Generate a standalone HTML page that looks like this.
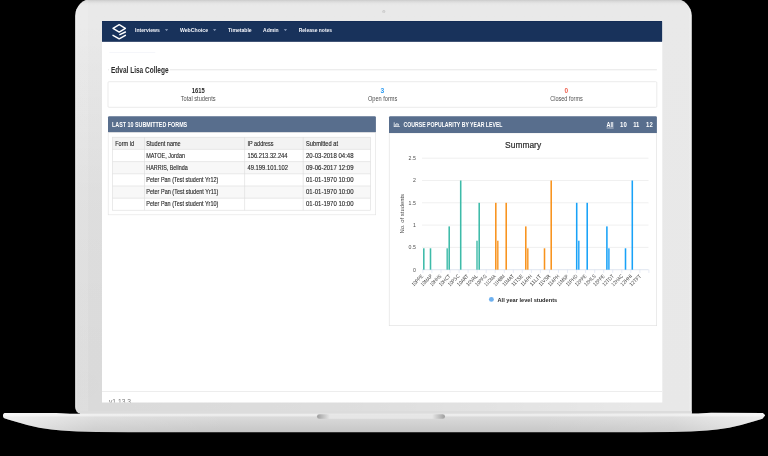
<!DOCTYPE html>
<html>
<head>
<meta charset="utf-8">
<title>Dashboard</title>
<style>
html,body{margin:0;padding:0;background:#000;}
body{width:768px;height:456px;overflow:hidden;font-family:"Liberation Sans",sans-serif;}
svg{display:block;}
text{font-family:"Liberation Sans",sans-serif;}
</style>
</head>
<body>
<svg width="768" height="456" viewBox="0 0 768 456">
<defs>
  <linearGradient id="lidg" x1="0" y1="0" x2="0" y2="413" gradientUnits="userSpaceOnUse">
    <stop offset="0" stop-color="#cbcbcb"/>
    <stop offset="0.004" stop-color="#dbdbdb"/>
    <stop offset="0.009" stop-color="#e6e6e6"/>
    <stop offset="0.014" stop-color="#e9e9e9"/>
    <stop offset="1" stop-color="#e8e8e8"/>
  </linearGradient>
  <radialGradient id="lidsh" gradientUnits="userSpaceOnUse" cx="0" cy="0" r="1" gradientTransform="translate(75 385) scale(570 365)">
    <stop offset="0" stop-color="#000" stop-opacity="0.064"/>
    <stop offset="0.5" stop-color="#000" stop-opacity="0.046"/>
    <stop offset="1" stop-color="#000" stop-opacity="0"/>
  </radialGradient>
  <linearGradient id="lidh" x1="75.2" y1="0" x2="691.7" y2="0" gradientUnits="userSpaceOnUse">
    <stop offset="0" stop-color="#fff" stop-opacity="0.4"/>
    <stop offset="0.004" stop-color="#fff" stop-opacity="0.1"/>
    <stop offset="0.02" stop-color="#fff" stop-opacity="0.1"/>
    <stop offset="0.022" stop-color="#fff" stop-opacity="0"/>
    <stop offset="0.995" stop-color="#fff" stop-opacity="0"/>
    <stop offset="1" stop-color="#fff" stop-opacity="0.4"/>
  </linearGradient>
  <linearGradient id="baseg" x1="0" y1="412.9" x2="0" y2="432.3" gradientUnits="userSpaceOnUse">
    <stop offset="0" stop-color="#f0f0f0"/>
    <stop offset="0.14" stop-color="#ececec"/>
    <stop offset="0.22" stop-color="#dadada"/>
    <stop offset="1" stop-color="#c6c6c6"/>
  </linearGradient>
  <linearGradient id="baseh" x1="3" y1="0" x2="765" y2="0" gradientUnits="userSpaceOnUse">
    <stop offset="0" stop-color="#fff" stop-opacity="0.55"/>
    <stop offset="0.12" stop-color="#fff" stop-opacity="0.12"/>
    <stop offset="0.3" stop-color="#fff" stop-opacity="0"/>
    <stop offset="0.7" stop-color="#fff" stop-opacity="0"/>
    <stop offset="0.88" stop-color="#fff" stop-opacity="0.12"/>
    <stop offset="1" stop-color="#fff" stop-opacity="0.55"/>
  </linearGradient>
  <linearGradient id="notchg" x1="0" y1="0" x2="1" y2="0">
    <stop offset="0" stop-color="#9c9c9c"/>
    <stop offset="0.03" stop-color="#b4b4b4"/>
    <stop offset="0.1" stop-color="#e6e6e6"/>
    <stop offset="0.9" stop-color="#e6e6e6"/>
    <stop offset="0.97" stop-color="#b4b4b4"/>
    <stop offset="1" stop-color="#9c9c9c"/>
  </linearGradient>
  <filter id="soft" color-interpolation-filters="sRGB" x="0" y="0" width="768" height="456" filterUnits="userSpaceOnUse"><feGaussianBlur stdDeviation="0.3"/></filter>
  <clipPath id="scr"><rect x="102" y="21" width="560.3" height="381.5"/></clipPath>
</defs>
<rect x="0" y="0" width="768" height="456" fill="#000"/>

<!-- LID -->
<path d="M80.7 413.6 A5.5 6.5 0 0 1 75.2 407.1 L75.2 15.8 A17 17 0 0 1 92.2 -1.2 L674.7 -1.2 A17 17 0 0 1 691.7 15.8 L691.7 413.6 Z" fill="url(#lidg)"/>
<path d="M80.7 413.6 A5.5 6.5 0 0 1 75.2 407.1 L75.2 15.8 A17 17 0 0 1 92.2 -1.2 L674.7 -1.2 A17 17 0 0 1 691.7 15.8 L691.7 413.6 Z" fill="url(#lidsh)"/>
<path d="M80.7 413.6 A5.5 6.5 0 0 1 75.2 407.1 L75.2 15.8 A17 17 0 0 1 92.2 -1.2 L674.7 -1.2 A17 17 0 0 1 691.7 15.8 L691.7 413.6 Z" fill="url(#lidh)"/>
<circle cx="383.8" cy="11.5" r="1.5" fill="#c9c9c9"/><circle cx="383.8" cy="11.9" r="0.9" fill="#dadada"/>

<!-- BASE -->
<rect x="80" y="411" width="611.7" height="5" fill="#dcdcdc"/>
<path d="M3.0 415.6 L3.4 414 L4.6 412.9 L56 412.9 L70 413.8 L698 413.6 L711 412.8 L762.8 412.9 L765.2 415.3 L762.4 418.7 L754.1 421.3 L747.1 423.2 L741.1 425.0 L729.1 427.7 L717.1 429.4 L707.1 430.4 L691.1 431.4 L672.1 432.0 L640.1 432.3 L128.2 432.3 L96.2 432.0 L77.2 431.4 L61.2 430.4 L51.2 429.4 L39.2 427.7 L27.2 425.0 L21.2 423.2 L14.2 421.3 L8.2 419.6 L4.4 418.2 L3.3 417.2 Z" fill="url(#baseg)"/>
<path d="M3.0 415.6 L3.4 414 L4.6 412.9 L56 412.9 L70 413.8 L698 413.6 L711 412.8 L762.8 412.9 L765.2 415.3 L762.4 418.7 L754.1 421.3 L747.1 423.2 L741.1 425.0 L729.1 427.7 L717.1 429.4 L707.1 430.4 L691.1 431.4 L672.1 432.0 L640.1 432.3 L128.2 432.3 L96.2 432.0 L77.2 431.4 L61.2 430.4 L51.2 429.4 L39.2 427.7 L27.2 425.0 L21.2 423.2 L14.2 421.3 L8.2 419.6 L4.4 418.2 L3.3 417.2 Z" fill="url(#baseh)"/>
<rect x="317" y="414.2" width="128" height="4.6" rx="2.3" fill="url(#notchg)"/>

<!-- SCREEN -->
<rect x="102" y="21" width="560.3" height="381.5" fill="#ffffff"/>
<g clip-path="url(#scr)"><g filter="url(#soft)">
  <!-- navbar -->
  <rect x="102" y="21" width="560.3" height="20.8" fill="#132b55"/><rect x="102" y="21.8" width="560.3" height="19.2" fill="#18325b"/>
  <g fill="none" stroke="#fff" stroke-width="1.4" stroke-linejoin="round" stroke-linecap="round">
    <path d="M113 28.4 L119.2 24.7 L125.4 28.4 L119.2 32.1 Z"/>
    <path d="M119.8 34.6 L125.4 32"/>
    <path d="M113 35.3 L119.2 38.9 L125.4 35.3"/>
  </g>
  <g fill="#f4f6fc" font-size="5.9" font-weight="700">
    <text x="135" y="32" textLength="24.7" lengthAdjust="spacingAndGlyphs">Interviews</text>
    <text x="179.9" y="32" textLength="28.2" lengthAdjust="spacingAndGlyphs">WebChoice</text>
    <text x="228" y="32" textLength="23.7" lengthAdjust="spacingAndGlyphs">Timetable</text>
    <text x="263" y="32" textLength="15.7" lengthAdjust="spacingAndGlyphs">Admin</text>
    <text x="298.7" y="32" textLength="33.4" lengthAdjust="spacingAndGlyphs">Release notes</text>
  </g>
  <g fill="#98a8c6">
    <path d="M164.9 29.2 h3.3 l-1.65 1.9 z"/>
    <path d="M213 29.2 h3.3 l-1.65 1.9 z"/>
    <path d="M283.8 29.2 h3.3 l-1.65 1.9 z"/>
  </g>

  <rect x="109.3" y="52.4" width="46" height="0.6" fill="#eef1f7"/>
  <!-- title -->
  <rect x="108" y="69.5" width="548.9" height="0.7" fill="#dcdcdc"/>
  <rect x="109" y="64" width="61" height="11" fill="#fff"/>
  <text x="111" y="72.6" font-size="8.4" font-weight="700" fill="#2b2b2b" textLength="57.6" lengthAdjust="spacingAndGlyphs">Edval Lisa College</text>

  <!-- stats -->
  <rect x="108" y="81.7" width="548.8" height="25.6" rx="1" fill="#fff" stroke="#dedede" stroke-width="0.6"/>
  <g font-size="6.6" text-anchor="middle" stroke-width="0.12">
    <text x="198.3" y="92.9" font-size="6.7" font-weight="700" fill="#2a2a2a" textLength="13" lengthAdjust="spacingAndGlyphs">1615</text>
    <text x="198.2" y="101.1" fill="#505050" textLength="34.8" lengthAdjust="spacingAndGlyphs">Total students</text>
    <text x="382.4" y="92.9" font-size="6.7" font-weight="700" fill="#2b9af0">3</text>
    <text x="382.6" y="101.1" fill="#505050" textLength="29.4" lengthAdjust="spacingAndGlyphs">Open forms</text>
    <text x="566.3" y="92.9" font-size="6.5" font-weight="700" fill="#f0604e">0</text>
    <text x="566.5" y="101.1" fill="#505050" textLength="32.5" lengthAdjust="spacingAndGlyphs">Closed forms</text>
  </g>

  <!-- panel 1 -->
  <path d="M108 132.6 V117.5 a1.2 1.2 0 0 1 1.2 -1.2 H374.7 a1.2 1.2 0 0 1 1.2 1.2 V132.6 Z" fill="#586e8d"/>
  <text x="112" y="127" font-size="6.7" font-weight="700" fill="#fff" textLength="75.2" lengthAdjust="spacingAndGlyphs">LAST 10 SUBMITTED FORMS</text>

  <rect x="108.2" y="132.6" width="267.5" height="82.2" fill="#fff" stroke="#e2e2e2" stroke-width="0.6"/>
  <!-- table -->
  <rect x="112.6" y="161.6" width="257.9" height="12.2" fill="#f8f8f8"/>
  <rect x="112.6" y="186" width="257.9" height="12.2" fill="#f8f8f8"/>
  <rect x="112.6" y="137.2" width="257.9" height="12.2" fill="#f3f3f3"/>
  <g stroke="#dcdcdc" stroke-width="0.6" fill="none">
    <rect x="112.6" y="137.2" width="257.9" height="73"/>
    <path d="M112.6 149.4 H370.5 M112.6 161.6 H370.5 M112.6 173.8 H370.5 M112.6 186 H370.5 M112.6 198.2 H370.5"/>
    <path d="M144.5 137.2 V210.2 M244.6 137.2 V210.2 M303.2 137.2 V210.2"/>
  </g>
  <g font-size="6.6" fill="#262626" stroke="#262626" stroke-width="0.12">
    <text x="115.2" y="145.5" textLength="18.8" lengthAdjust="spacingAndGlyphs">Form id</text>
    <text x="146.3" y="145.5" textLength="34.4" lengthAdjust="spacingAndGlyphs">Student name</text>
    <text x="247.5" y="145.5" textLength="26" lengthAdjust="spacingAndGlyphs">IP address</text>
    <text x="306" y="145.5" textLength="32" lengthAdjust="spacingAndGlyphs">Submitted at</text>

    <text x="146.3" y="157.5" textLength="38.7" lengthAdjust="spacingAndGlyphs">MATOE, Jordan</text>
    <text x="247.5" y="157.5" textLength="40" lengthAdjust="spacingAndGlyphs">156.213.32.244</text>
    <text x="306" y="157.5" textLength="47.5" lengthAdjust="spacingAndGlyphs">20-03-2018 04:48</text>

    <text x="146.3" y="169.7" textLength="41.5" lengthAdjust="spacingAndGlyphs">HARRIS, Belinda</text>
    <text x="247.5" y="169.7" textLength="40.5" lengthAdjust="spacingAndGlyphs">49.199.101.102</text>
    <text x="306" y="169.7" textLength="47.5" lengthAdjust="spacingAndGlyphs">09-06-2017 12:09</text>

    <text x="146.3" y="181.9" textLength="72" lengthAdjust="spacingAndGlyphs">Peter Pan (Test student Yr12)</text>
    <text x="306" y="181.9" textLength="47.5" lengthAdjust="spacingAndGlyphs">01-01-1970 10:00</text>
    <text x="146.3" y="194.0" textLength="72" lengthAdjust="spacingAndGlyphs">Peter Pan (Test student Yr11)</text>
    <text x="306" y="194.0" textLength="47.5" lengthAdjust="spacingAndGlyphs">01-01-1970 10:00</text>
    <text x="146.3" y="206.2" textLength="72" lengthAdjust="spacingAndGlyphs">Peter Pan (Test student Yr10)</text>
    <text x="306" y="206.2" textLength="47.5" lengthAdjust="spacingAndGlyphs">01-01-1970 10:00</text>
  </g>

  <!-- panel 2 -->
  <rect x="389.2" y="133" width="267.5" height="192.7" fill="#fff" stroke="#dedede" stroke-width="0.6"/>
  <path d="M389 132.9 V117.5 a1.2 1.2 0 0 1 1.2 -1.2 H655.7 a1.2 1.2 0 0 1 1.2 1.2 V132.9 Z" fill="#586e8d"/>
  <g fill="#fff">
    <rect x="393.8" y="122.3" width="0.7" height="4.4"/>
    <rect x="393.8" y="126" width="6" height="0.7"/>
    <rect x="395.2" y="124.3" width="0.9" height="1.4"/>
    <rect x="396.5" y="123" width="0.9" height="2.7"/>
    <rect x="397.8" y="123.8" width="0.9" height="1.9"/>
  </g>
  <text x="403.5" y="127" font-size="6.7" font-weight="700" fill="#fff" textLength="99" lengthAdjust="spacingAndGlyphs">COURSE POPULARITY BY YEAR LEVEL</text>
  <g font-size="6.7" font-weight="700" fill="#fff">
    <text x="606.6" y="127" textLength="7" lengthAdjust="spacingAndGlyphs">All</text>
    <rect x="606.6" y="127.7" width="7" height="0.6"/>
    <text x="620.1" y="127" textLength="6.7" lengthAdjust="spacingAndGlyphs">10</text>
    <text x="633.2" y="127" textLength="6.2" lengthAdjust="spacingAndGlyphs">11</text>
    <text x="646.1" y="127" textLength="6.6" lengthAdjust="spacingAndGlyphs">12</text>
  </g>

  <!-- chart -->
  <g stroke="#e9e9e9" stroke-width="0.7">
  <path d="M422 247.4 H648.5"/>
  <path d="M422 225.1 H648.5"/>
  <path d="M422 202.8 H648.5"/>
  <path d="M422 180.5 H648.5"/>
  <path d="M422 158.2 H648.5"/>
  </g>
  <path d="M422 269.7 H648.5" stroke="#d3dbea" stroke-width="0.7"/>
  <path d="M422.9 269.7 v3.2 M431.9 269.7 v3.2 M441.0 269.7 v3.2 M450.0 269.7 v3.2 M459.1 269.7 v3.2 M468.1 269.7 v3.2 M477.1 269.7 v3.2 M486.2 269.7 v3.2 M495.2 269.7 v3.2 M504.3 269.7 v3.2 M513.3 269.7 v3.2 M522.3 269.7 v3.2 M531.4 269.7 v3.2 M540.4 269.7 v3.2 M549.5 269.7 v3.2 M558.5 269.7 v3.2 M567.5 269.7 v3.2 M576.6 269.7 v3.2 M585.6 269.7 v3.2 M594.7 269.7 v3.2 M603.7 269.7 v3.2 M612.7 269.7 v3.2 M621.8 269.7 v3.2 M630.8 269.7 v3.2 M639.9 269.7 v3.2 M648.9 269.7 v3.2 " stroke="#d6deee" stroke-width="0.6" fill="none"/>
  <g font-size="5.2" fill="#4d4d4d" text-anchor="end">
  <text x="415.8" y="160.0">2.5</text>
  <text x="415.8" y="182.3">2</text>
  <text x="415.8" y="204.6">1.5</text>
  <text x="415.8" y="226.9">1</text>
  <text x="415.8" y="249.2">0.5</text>
  <text x="415.8" y="271.5">0</text>
  </g>
  <text transform="translate(404.4 213.7) rotate(-90)" font-size="5.6" fill="#4d4d4d" text-anchor="middle" textLength="39.5" lengthAdjust="spacingAndGlyphs">No. of students</text>
  <rect x="423.03" y="248.3" width="1.55" height="21.4" fill="#3dbba9"/>
  <rect x="429.73" y="248.3" width="1.55" height="21.4" fill="#3dbba9"/>
  <rect x="446.43" y="248.3" width="1.55" height="21.4" fill="#3dbba9" fill-opacity="0.9"/>
  <rect x="448.43" y="226.4" width="1.55" height="43.3" fill="#3dbba9"/>
  <rect x="459.93" y="180.5" width="1.55" height="89.2" fill="#3dbba9"/>
  <rect x="476.23" y="240.7" width="1.55" height="29.0" fill="#3dbba9" fill-opacity="0.9"/>
  <rect x="478.43" y="202.8" width="1.55" height="66.9" fill="#3dbba9"/>
  <rect x="495.03" y="202.8" width="1.55" height="66.9" fill="#f8931d"/>
  <rect x="497.03" y="240.7" width="1.55" height="29.0" fill="#f8931d" fill-opacity="0.9"/>
  <rect x="505.43" y="202.8" width="1.55" height="66.9" fill="#f8931d"/>
  <rect x="525.02" y="226.4" width="1.55" height="43.3" fill="#f8931d"/>
  <rect x="527.02" y="248.3" width="1.55" height="21.4" fill="#f8931d" fill-opacity="0.9"/>
  <rect x="543.73" y="248.3" width="1.55" height="21.4" fill="#f8931d"/>
  <rect x="550.43" y="180.5" width="1.55" height="89.2" fill="#f8931d"/>
  <rect x="575.93" y="202.8" width="1.55" height="66.9" fill="#18a2f8"/>
  <rect x="578.02" y="240.7" width="1.55" height="29.0" fill="#18a2f8" fill-opacity="0.9"/>
  <rect x="586.43" y="202.8" width="1.55" height="66.9" fill="#18a2f8"/>
  <rect x="606.12" y="226.4" width="1.55" height="43.3" fill="#18a2f8"/>
  <rect x="608.12" y="248.3" width="1.55" height="21.4" fill="#18a2f8" fill-opacity="0.9"/>
  <rect x="624.73" y="248.3" width="1.55" height="21.4" fill="#18a2f8"/>
  <rect x="631.52" y="180.5" width="1.55" height="89.2" fill="#18a2f8"/>
  <g font-size="5.3" fill="#454545" text-anchor="end">
  <text transform="translate(423.6 276.6) rotate(-45)" textLength="14" lengthAdjust="spacingAndGlyphs">10PPE</text>
  <text transform="translate(432.7 276.6) rotate(-45)" textLength="14" lengthAdjust="spacingAndGlyphs">10MAP</text>
  <text transform="translate(441.8 276.6) rotate(-45)" textLength="14" lengthAdjust="spacingAndGlyphs">10HHS</text>
  <text transform="translate(450.8 276.6) rotate(-45)" textLength="14" lengthAdjust="spacingAndGlyphs">10HCT</text>
  <text transform="translate(459.9 276.6) rotate(-45)" textLength="14" lengthAdjust="spacingAndGlyphs">10PSC</text>
  <text transform="translate(469.0 276.6) rotate(-45)" textLength="14" lengthAdjust="spacingAndGlyphs">10ART</text>
  <text transform="translate(478.1 276.6) rotate(-45)" textLength="14" lengthAdjust="spacingAndGlyphs">10VAL</text>
  <text transform="translate(487.2 276.6) rotate(-45)" textLength="14" lengthAdjust="spacingAndGlyphs">10PFG</text>
  <text transform="translate(496.2 276.6) rotate(-45)" textLength="14" lengthAdjust="spacingAndGlyphs">11CMA</text>
  <text transform="translate(505.3 276.6) rotate(-45)" textLength="14" lengthAdjust="spacingAndGlyphs">11HBM</text>
  <text transform="translate(514.4 276.6) rotate(-45)" textLength="14" lengthAdjust="spacingAndGlyphs">11MAT</text>
  <text transform="translate(523.5 276.6) rotate(-45)" textLength="14" lengthAdjust="spacingAndGlyphs">11TSE</text>
  <text transform="translate(532.6 276.6) rotate(-45)" textLength="14" lengthAdjust="spacingAndGlyphs">11APH</text>
  <text transform="translate(541.6 276.6) rotate(-45)" textLength="14" lengthAdjust="spacingAndGlyphs">11LIT</text>
  <text transform="translate(550.7 276.6) rotate(-45)" textLength="14" lengthAdjust="spacingAndGlyphs">11VSR</text>
  <text transform="translate(559.8 276.6) rotate(-45)" textLength="14" lengthAdjust="spacingAndGlyphs">11APH</text>
  <text transform="translate(568.9 276.6) rotate(-45)" textLength="14" lengthAdjust="spacingAndGlyphs">11MSP</text>
  <text transform="translate(578.0 276.6) rotate(-45)" textLength="14" lengthAdjust="spacingAndGlyphs">11PHD</text>
  <text transform="translate(587.0 276.6) rotate(-45)" textLength="14" lengthAdjust="spacingAndGlyphs">12PPE</text>
  <text transform="translate(596.1 276.6) rotate(-45)" textLength="14" lengthAdjust="spacingAndGlyphs">12HLS</text>
  <text transform="translate(605.2 276.6) rotate(-45)" textLength="14" lengthAdjust="spacingAndGlyphs">12PPE</text>
  <text transform="translate(614.3 276.6) rotate(-45)" textLength="14" lengthAdjust="spacingAndGlyphs">12TDT</text>
  <text transform="translate(623.4 276.6) rotate(-45)" textLength="14" lengthAdjust="spacingAndGlyphs">12HAC</text>
  <text transform="translate(632.4 276.6) rotate(-45)" textLength="14" lengthAdjust="spacingAndGlyphs">12HHI</text>
  <text transform="translate(641.5 276.6) rotate(-45)" textLength="14" lengthAdjust="spacingAndGlyphs">12TFT</text>
  </g>
  <text x="505.1" y="147.8" font-size="9.6" fill="#2a2a2a" stroke="#2a2a2a" stroke-width="0.2" textLength="36" lengthAdjust="spacingAndGlyphs">Summary</text>
  <circle cx="491.4" cy="299.4" r="2.45" fill="#6db0ef"/>
  <text x="497.5" y="301.9" font-size="6.15" font-weight="700" fill="#2a2a2a" textLength="59.7" lengthAdjust="spacingAndGlyphs">All year level students</text>
  <!-- footer -->
  <rect x="102" y="391" width="560.3" height="0.6" fill="#e2e2e2"/>
  <text x="109" y="404" font-size="6.4" fill="#777" textLength="22" lengthAdjust="spacingAndGlyphs">v1.13.3</text>
</g></g>
</svg>
</body>
</html>
